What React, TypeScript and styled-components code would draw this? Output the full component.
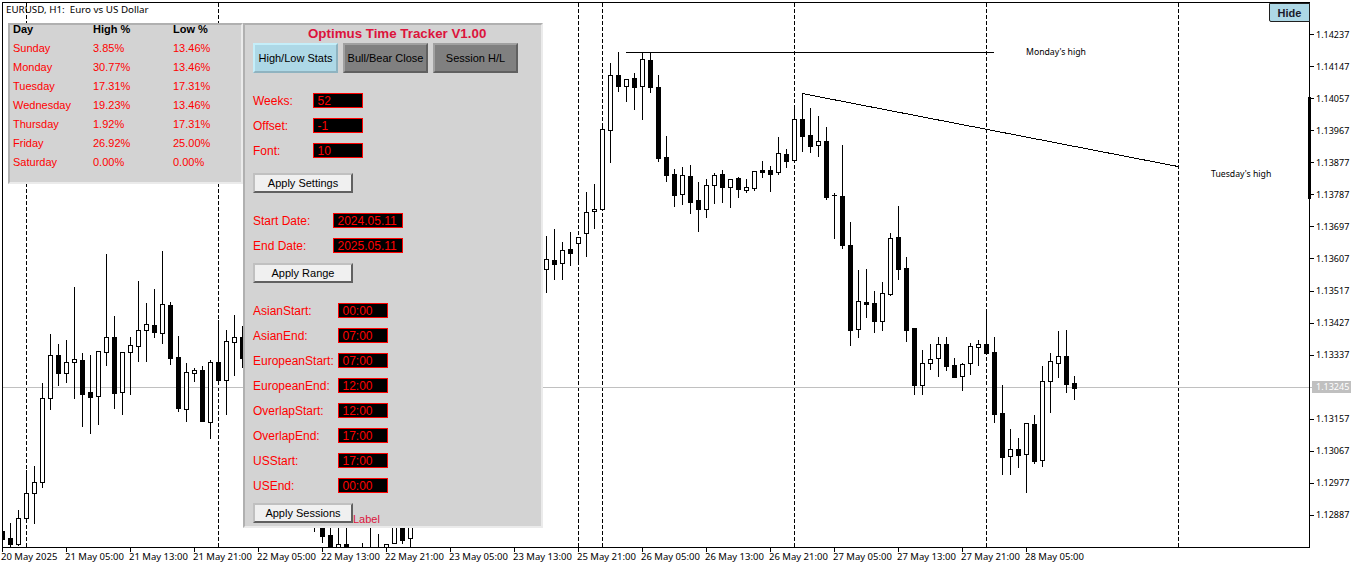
import React from "react";
import styled, { createGlobalStyle } from "styled-components";

// x, high, bodyTop, bodyBottom, low, isBear
type Bar = [number, number, number, number, number, number];

const bars: Bar[] = [
  [2, 525, 531, 539, 547, 1], [10, 523, 538, 544, 547, 1], [18, 510, 518, 544, 545, 0], [26, 470, 493, 518, 521, 0],
  [34, 466, 482, 493, 523, 0], [42, 383, 398, 482, 487, 0], [50, 334, 355, 398, 409, 0], [58, 344, 355, 373, 385, 1],
  [66, 340, 362, 373, 382, 0], [74, 287, 359, 362, 398, 0], [82, 353, 360, 394, 426, 1], [90, 355, 392, 397, 433, 1],
  [98, 351, 351, 396, 424, 0], [106, 254, 337, 352, 365, 0], [114, 316, 337, 393, 408, 1], [122, 352, 352, 392, 414, 0],
  [130, 337, 345, 352, 394, 0], [138, 281, 330, 346, 361, 0], [146, 303, 324, 330, 361, 0], [154, 289, 325, 332, 337, 1],
  [162, 251, 304, 333, 343, 0], [170, 302, 305, 358, 364, 1], [178, 336, 357, 408, 411, 1], [186, 363, 372, 409, 421, 0],
  [194, 368, 370, 373, 381, 0], [202, 366, 370, 421, 421, 1], [210, 360, 362, 422, 438, 0], [218, 320, 362, 380, 382, 1],
  [226, 330, 341, 380, 414, 0], [234, 315, 337, 342, 375, 0], [242, 326, 337, 358, 367, 1],
  [314, 500, 505, 515, 531, 1], [322, 500, 505, 536, 542, 1], [330, 500, 535, 560, 560, 1], [338, 500, 544, 560, 560, 0],
  [346, 500, 544, 560, 560, 1], [362, 543, 560, 560, 560, 0], [370, 500, 560, 560, 560, 0], [378, 534, 560, 560, 560, 0],
  [386, 544, 544, 560, 560, 0], [394, 500, 505, 543, 543, 0], [402, 500, 505, 540, 543, 1], [410, 500, 505, 538, 547, 0],
  [546, 236, 259, 269, 292, 0], [554, 229, 260, 264, 279, 1], [562, 242, 250, 263, 279, 0], [570, 232, 249, 253, 265, 1],
  [578, 237, 237, 243, 263, 0], [586, 192, 212, 233, 256, 0], [594, 184, 209, 211, 228, 0], [602, 127, 129, 209, 209, 0],
  [610, 63, 75, 130, 162, 0], [618, 52, 75, 86, 91, 1], [626, 79, 79, 86, 101, 0], [634, 73, 78, 87, 109, 1],
  [642, 52, 59, 86, 119, 0], [650, 52, 60, 87, 92, 1], [658, 75, 87, 158, 161, 1], [666, 136, 157, 175, 181, 1],
  [674, 169, 174, 195, 206, 1], [682, 167, 175, 194, 204, 0], [690, 165, 176, 202, 213, 1], [698, 182, 200, 209, 231, 1],
  [706, 179, 185, 209, 217, 0], [714, 173, 175, 185, 203, 0], [722, 170, 174, 187, 202, 1], [730, 179, 179, 187, 207, 0],
  [738, 177, 178, 189, 197, 1], [746, 179, 187, 190, 192, 0], [754, 171, 171, 188, 190, 0], [762, 161, 170, 172, 177, 1],
  [770, 166, 170, 174, 191, 1], [778, 137, 153, 172, 174, 0], [786, 149, 154, 161, 167, 1], [794, 109, 119, 160, 161, 0],
  [802, 93, 119, 136, 151, 1], [810, 108, 135, 146, 152, 1], [818, 116, 141, 145, 156, 0], [826, 127, 141, 197, 199, 1],
  [834, 193, 195, 195, 238, 1], [842, 145, 196, 245, 248, 1], [850, 222, 245, 330, 345, 1], [858, 270, 301, 329, 337, 0],
  [866, 269, 302, 304, 317, 1], [874, 291, 303, 321, 332, 1], [882, 282, 293, 321, 330, 0], [890, 233, 238, 294, 295, 0],
  [898, 206, 237, 269, 279, 1], [906, 257, 268, 330, 341, 1], [914, 328, 328, 385, 394, 1], [922, 350, 363, 385, 394, 0],
  [930, 344, 359, 363, 369, 0], [938, 337, 344, 358, 376, 0], [946, 337, 344, 366, 370, 1], [954, 358, 365, 377, 377, 1],
  [962, 363, 364, 376, 390, 0], [970, 343, 346, 363, 374, 0], [978, 340, 344, 347, 365, 0], [986, 313, 344, 353, 353, 1],
  [994, 337, 352, 414, 422, 1], [1002, 385, 413, 457, 474, 1], [1010, 429, 449, 456, 474, 0], [1018, 438, 449, 455, 467, 1],
  [1026, 423, 423, 454, 492, 0], [1034, 415, 424, 461, 463, 1], [1042, 366, 381, 460, 466, 0], [1050, 353, 361, 381, 412, 0],
  [1058, 331, 356, 363, 377, 0], [1066, 330, 356, 384, 392, 1], [1074, 376, 383, 388, 399, 1],
];

const separators = [26, 218, 578, 602, 794, 986, 1178];

const prices = [
  "1.14237", "1.14147", "1.14057", "1.13967", "1.13877", "1.13787", "1.13697", "1.13607",
  "1.13517", "1.13427", "1.13337", "1.13245", "1.13157", "1.13067", "1.12977", "1.12887",
];

const times = [
  "20 May 2025", "21 May 05:00", "21 May 13:00", "21 May 21:00", "22 May 05:00", "22 May 13:00",
  "22 May 21:00", "23 May 05:00", "23 May 13:00", "25 May 21:00", "26 May 05:00", "26 May 13:00",
  "26 May 21:00", "27 May 05:00", "27 May 13:00", "27 May 21:00", "28 May 05:00",
];

const stats = [
  ["Sunday", "3.85%", "13.46%"],
  ["Monday", "30.77%", "13.46%"],
  ["Tuesday", "17.31%", "17.31%"],
  ["Wednesday", "19.23%", "13.46%"],
  ["Thursday", "1.92%", "17.31%"],
  ["Friday", "26.92%", "25.00%"],
  ["Saturday", "0.00%", "0.00%"],
];

const sessions = [
  ["AsianStart:", "00:00"],
  ["AsianEnd:", "07:00"],
  ["EuropeanStart:", "07:00"],
  ["EuropeanEnd:", "12:00"],
  ["OverlapStart:", "12:00"],
  ["OverlapEnd:", "17:00"],
  ["USStart:", "17:00"],
  ["USEnd:", "00:00"],
];

const GlobalStyle = createGlobalStyle`
  html, body {
    margin: 0;
    padding: 0;
    background: #fff;
    overflow: hidden;
  }
`;

const Terminal = styled.div`
  display: grid;
  grid-template-columns: 1308px 52px;
  grid-template-rows: 546px 19px;
  width: 1362px;
  height: 568px;
  padding: 2px 0 0 2px;
  box-sizing: border-box;
  font-family: "Noto Sans", sans-serif;
  font-size: 9.5px;
  color: #000;
  background: #fff;
`;

const Plot = styled.div`
  position: relative;
  box-sizing: border-box;
  border: 1px solid #000;
`;

const ChartSvg = styled.svg`
  display: block;
  width: 1306px;
  height: 544px;
`;

const ChartNote = styled.text`
  font-family: "Noto Sans", sans-serif;
  font-size: 8.7px;
  fill: #000;
`;

const ChartTitle = styled.div`
  position: absolute;
  top: 0;
  left: 3px;
  font-size: 9.8px;
  line-height: 13px;
  white-space: pre;
`;

const HideButton = styled.button`
  position: absolute;
  top: 0;
  right: -1px;
  width: 41px;
  height: 19px;
  padding: 0;
  box-sizing: border-box;
  border: 1px solid #202020;
  border-radius: 0 0 0 2px;
  background: #add8e6;
  color: #1a1a2a;
  font-family: "Liberation Sans", sans-serif;
  font-size: 11px;
  font-weight: 700;
`;

const StatsPanel = styled.div`
  position: absolute;
  top: 20px;
  left: 5px;
  width: 235px;
  height: 161px;
  box-sizing: border-box;
  padding-left: 3px;
  border: 2px solid;
  border-color: #b0b0b0 #ebebeb #ebebeb #b0b0b0;
  background: #d3d3d3;
  font-family: "Liberation Sans", sans-serif;
  font-size: 11px;
`;

const StatsRow = styled.div`
  display: grid;
  grid-template-columns: 80px 80px 60px;
  height: 19px;
  line-height: 8px;
  color: #ff0000;
`;

const StatsHead = styled(StatsRow)`
  color: #000;
  font-weight: 700;
`;

const ControlPanel = styled.div`
  position: absolute;
  top: 20px;
  left: 240px;
  width: 300px;
  height: 505px;
  box-sizing: border-box;
  padding-left: 8px;
  border: 2px solid;
  border-color: #b0b0b0 #ebebeb #ebebeb #b0b0b0;
  background: #d3d3d3;
  font-family: "Liberation Sans", sans-serif;
  font-size: 12px;
  color: #ff0000;
`;

const PanelTitle = styled.div`
  height: 18px;
  padding-left: 55px;
  line-height: 17px;
  font-size: 13.33px;
  font-weight: 700;
  color: #dc143c;
  white-space: nowrap;
`;

const Tabs = styled.div`
  display: flex;
  gap: 5px;
`;

const Tab = styled.div<{ $active?: boolean }>`
  width: 85px;
  height: 30px;
  box-sizing: border-box;
  display: flex;
  align-items: center;
  justify-content: center;
  border: 2px solid;
  border-color: ${(p) => (p.$active ? "#c4eef9 #8fb3c0 #8fb3c0 #c4eef9" : "#a0a0a0 #606060 #606060 #a0a0a0")};
  background: ${(p) => (p.$active ? "#add8e6" : "#808080")};
  font-size: 11px;
  color: #000;
`;

const FieldGroup = styled.div<{ $top: number }>`
  display: flex;
  flex-direction: column;
  gap: 10px;
  margin-top: ${(p) => p.$top}px;
`;

const FieldRow = styled.div`
  display: flex;
  align-items: center;
  height: 15px;
`;

const FieldLabel = styled.div<{ $width: number }>`
  width: ${(p) => p.$width}px;
  white-space: nowrap;
`;

const FieldValue = styled.div<{ $width: number }>`
  width: ${(p) => p.$width}px;
  height: 15px;
  box-sizing: border-box;
  padding-left: 3.5px;
  border: 1px solid #ff0000;
  background: #000;
  line-height: 14px;
  color: #ff0000;
`;

const ApplyButton = styled.div<{ $top: number }>`
  width: 100px;
  height: 20px;
  box-sizing: border-box;
  margin-top: ${(p) => p.$top}px;
  display: flex;
  align-items: center;
  justify-content: center;
  border: 2px solid;
  border-color: #c0c0c0 #606060 #606060 #c0c0c0;
  background: #f0f0f0;
  font-size: 11px;
  color: #000;
`;

const StrayLabel = styled.div`
  position: absolute;
  left: 108px;
  top: 488px;
  font-size: 11px;
  line-height: 13px;
  color: #dc143c;
`;

const PriceAxis = styled.div`
  position: relative;
  display: flex;
  flex-direction: column;
  padding-top: 16.5px;
  font-size: 9px;
`;

const AxisGrip = styled.div`
  position: absolute;
  top: 95px;
  left: -2px;
  width: 3px;
  height: 102px;
  background: #000;
`;

const PriceRow = styled.div`
  display: flex;
  align-items: center;
  height: 32.07px;
  flex: none;
`;

const PriceTick = styled.div<{ $current?: boolean }>`
  width: ${(p) => (p.$current ? 2 : 4)}px;
  height: 1px;
  background: ${(p) => (p.$current ? "#c0c0c0" : "#000")};
`;

const PriceText = styled.div<{ $current?: boolean }>`
  box-sizing: border-box;
  width: ${(p) => (p.$current ? "39px" : "auto")};
  margin-left: ${(p) => (p.$current ? 0 : 2)}px;
  padding-left: ${(p) => (p.$current ? 4 : 0)}px;
  line-height: 12px;
  background: ${(p) => (p.$current ? "#c0c0c0" : "transparent")};
  color: ${(p) => (p.$current ? "#fff" : "#000")};
`;

const TimeAxis = styled.div`
  display: flex;
`;

const TimeCell = styled.div`
  display: flex;
  flex-direction: column;
  width: 64px;
  flex: none;
`;

const TimeTick = styled.div`
  width: 1px;
  height: 4px;
  background: #000;
`;

const TimeText = styled.div`
  margin: -1px 0 0 -1px;
  line-height: 12px;
  white-space: nowrap;
`;

const Candle: React.FC<{ bar: Bar }> = ({ bar }) => {
  const [x, high, top, bottom, low, isBear] = bar;
  const h = bottom - top + 1;
  return (
    <g>
      <rect x={x} y={high} width={1} height={low - high + 1} fill="#000" />
      <rect x={x - 2} y={top} width={5} height={h} fill="#000" />
      {!isBear && h > 2 && <rect x={x - 1} y={top + 1} width={3} height={h - 2} fill="#fff" />}
    </g>
  );
};

const Chart: React.FC = () => (
  <ChartSvg viewBox="3 3 1306 544" shapeRendering="crispEdges">
    {separators.map((x) => (
      <line key={x} x1={x + 0.5} x2={x + 0.5} y1={3} y2={547} stroke="#000" strokeDasharray="4 2" />
    ))}
    <rect x={3} y={387} width={1306} height={1} fill="#c0c0c0" />
    {bars.map((b) => (
      <Candle key={b[0]} bar={b} />
    ))}
    <rect x={626} y={52} width={368} height={1} fill="#000" />
    <line x1={802} y1={93.5} x2={1178} y2={166.5} stroke="#000" />
    <ChartNote x={1026} y={55}>Monday's high</ChartNote>
    <ChartNote x={1211} y={177}>Tuesday's high</ChartNote>
  </ChartSvg>
);

export default function App() {
  return (
    <>
      <GlobalStyle />
      <Terminal>
        <Plot>
          <Chart />
          <ChartTitle>{"EURUSD, H1:  Euro vs US Dollar"}</ChartTitle>
          <HideButton>Hide</HideButton>

          <StatsPanel>
            <StatsHead>
              <span>Day</span>
              <span>High %</span>
              <span>Low %</span>
            </StatsHead>
            {stats.map(([day, high, low]) => (
              <StatsRow key={day}>
                <span>{day}</span>
                <span>{high}</span>
                <span>{low}</span>
              </StatsRow>
            ))}
          </StatsPanel>

          <ControlPanel>
            <PanelTitle>Optimus Time Tracker V1.00</PanelTitle>
            <Tabs>
              <Tab $active>High/Low Stats</Tab>
              <Tab>Bull/Bear Close</Tab>
              <Tab>Session H/L</Tab>
            </Tabs>

            <FieldGroup $top={20}>
              <FieldRow>
                <FieldLabel $width={60}>Weeks:</FieldLabel>
                <FieldValue $width={50}>52</FieldValue>
              </FieldRow>
              <FieldRow>
                <FieldLabel $width={60}>Offset:</FieldLabel>
                <FieldValue $width={50}>-1</FieldValue>
              </FieldRow>
              <FieldRow>
                <FieldLabel $width={60}>Font:</FieldLabel>
                <FieldValue $width={50}>10</FieldValue>
              </FieldRow>
            </FieldGroup>
            <ApplyButton $top={15}>Apply Settings</ApplyButton>

            <FieldGroup $top={20}>
              <FieldRow>
                <FieldLabel $width={80}>Start Date:</FieldLabel>
                <FieldValue $width={70}>2024.05.11</FieldValue>
              </FieldRow>
              <FieldRow>
                <FieldLabel $width={80}>End Date:</FieldLabel>
                <FieldValue $width={70}>2025.05.11</FieldValue>
              </FieldRow>
            </FieldGroup>
            <ApplyButton $top={10}>Apply Range</ApplyButton>

            <FieldGroup $top={20}>
              {sessions.map(([name, value]) => (
                <FieldRow key={name}>
                  <FieldLabel $width={85}>{name}</FieldLabel>
                  <FieldValue $width={50}>{value}</FieldValue>
                </FieldRow>
              ))}
            </FieldGroup>
            <ApplyButton $top={10}>Apply Sessions</ApplyButton>
            <StrayLabel>Label</StrayLabel>
          </ControlPanel>
        </Plot>

        <PriceAxis>
          <AxisGrip />
          {prices.map((p, i) => (
            <PriceRow key={p}>
              <PriceTick $current={i === 11} />
              <PriceText $current={i === 11}>{p}</PriceText>
            </PriceRow>
          ))}
        </PriceAxis>

        <TimeAxis>
          {times.map((t) => (
            <TimeCell key={t}>
              <TimeTick />
              <TimeText>{t}</TimeText>
            </TimeCell>
          ))}
        </TimeAxis>
      </Terminal>
    </>
  );
}
